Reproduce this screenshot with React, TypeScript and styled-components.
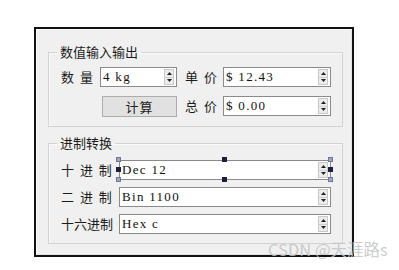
import React from "react";
import styled, { createGlobalStyle } from "styled-components";

const Global = createGlobalStyle`
  html, body { margin: 0; padding: 0; background: #ffffff; }
  body { font-family: "Noto Sans CJK SC", "Noto Sans", sans-serif; }
`;

const Page = styled.div`
  position: relative;
  width: 399px;
  height: 270px;
  padding: 27px 0 0 34px;
  box-sizing: border-box;
`;

const Window = styled.div`
  width: 320px;
  box-sizing: border-box;
  border: 2px solid #111111;
  background: #f0f0f0;
  box-shadow: inset 1px 1px 0 #fbfbfb, inset -1px -1px 0 #e4e4e4;
  padding: 15px 9px 11px 12px;
  display: flex;
  flex-direction: column;
  gap: 8px;
`;

const Group = styled.fieldset<{ $padTop: number; $padBottom: number }>`
  margin: 0;
  min-width: 0;
  border: 1px solid #d3d3d3;
  box-shadow: inset 1px 1px 0 #fafafa;
  padding: ${(p) => p.$padTop}px 12px ${(p) => p.$padBottom}px 12px;
`;

const Title = styled.legend`
  margin-left: -4px;
  padding: 0 3px;
  font-size: 13px;
  line-height: 16px;
  color: #1c1c1c;
`;

const CalcGrid = styled.div`
  display: grid;
  grid-template-columns: 39px 77px 46px 108px;
  grid-auto-rows: 20px;
  row-gap: 9px;
  align-items: center;
`;

const BaseGrid = styled.div`
  display: grid;
  grid-template-columns: 58px 212px;
  grid-auto-rows: 20px;
  row-gap: 7px;
  align-items: center;
`;

const Label = styled.span<{ $indent?: number }>`
  font-size: 13px;
  line-height: 20px;
  color: #1c1c1c;
  white-space: pre;
  word-spacing: 3px;
  padding-left: ${(p) => p.$indent ?? 0}px;
`;

const BoxWrap = styled.div`
  position: relative;
  height: 20px;
`;

const Box = styled.div`
  box-sizing: border-box;
  height: 20px;
  background: #ffffff;
  border: 1px solid #8a8a8a;
  display: flex;
  align-items: center;
  padding: 0 2px 0 2px;
`;

const Value = styled.span`
  flex: 1;
  font-family: "Liberation Serif", "DejaVu Serif", serif;
  font-size: 13px;
  letter-spacing: 1.3px;
  color: #111111;
  white-space: pre;
  overflow: hidden;
`;

const Spin = styled.div`
  width: 10px;
  height: 16px;
  display: flex;
  flex-direction: column;
  border: 1px solid #c9c9c9;
  box-sizing: border-box;
  background: #ececec;
`;

const SpinHalf = styled.div<{ $down?: boolean }>`
  flex: 1;
  display: flex;
  align-items: center;
  justify-content: center;
  border-top: ${(p) => (p.$down ? "1px solid #cfcfcf" : "none")};
`;

const Button = styled.div`
  box-sizing: border-box;
  width: 75px;
  height: 21px;
  margin-left: 2px;
  background: #e1e1e1;
  border: 1px solid #adadad;
  display: flex;
  align-items: center;
  justify-content: center;
  font-size: 13px;
  letter-spacing: 1px;
  color: #1c1c1c;
`;

const Handle = styled.div<{ $x: string; $y: string; $corner?: boolean }>`
  position: absolute;
  left: ${(p) => p.$x};
  top: ${(p) => p.$y};
  width: 5px;
  height: 5px;
  margin: -3px 0 0 -3px;
  box-sizing: border-box;
  background: ${(p) => (p.$corner ? "#9fa6c4" : "#1d1d3d")};
  border: 1px solid ${(p) => (p.$corner ? "#6f7796" : "#1d1d3d")};
`;

const Watermark = styled.div`
  position: absolute;
  left: 268px;
  top: 240px;
  font-family: "Noto Sans CJK SC", "Noto Sans", sans-serif;
  font-size: 16.5px;
  line-height: 18px;
  color: rgba(195, 195, 195, 0.85);
  white-space: pre;
`;

const Arrow = ({ down }: { down?: boolean }) => (
  <svg width="5" height="3" viewBox="0 0 5 3">
    {down ? <polygon points="0,0 5,0 2.5,3" fill="#222" /> : <polygon points="0,3 5,3 2.5,0" fill="#222" />}
  </svg>
);

const SpinBox = ({ value, selected }: { value: string; selected?: boolean }) => (
  <BoxWrap>
    <Box>
      <Value>{value}</Value>
      <Spin>
        <SpinHalf>
          <Arrow />
        </SpinHalf>
        <SpinHalf $down>
          <Arrow down />
        </SpinHalf>
      </Spin>
    </Box>
    {selected && (
      <>
        <Handle $x="0%" $y="0%" $corner />
        <Handle $x="50%" $y="0%" />
        <Handle $x="100%" $y="0%" $corner />
        <Handle $x="0%" $y="50%" />
        <Handle $x="100%" $y="50%" />
        <Handle $x="0%" $y="100%" $corner />
        <Handle $x="50%" $y="100%" />
        <Handle $x="100%" $y="100%" $corner />
      </>
    )}
  </BoxWrap>
);

export default function App() {
  return (
    <Page>
      <Global />
      <Window>
        <Group $padTop={7} $padBottom={10}>
          <Title>数值输入输出</Title>
          <CalcGrid>
            <Label>数 量</Label>
            <SpinBox value="4 kg" />
            <Label $indent={8}>单 价</Label>
            <SpinBox value="$ 12.43" />
            <span />
            <Button>计算</Button>
            <Label $indent={8}>总 价</Label>
            <SpinBox value="$ 0.00" />
          </CalcGrid>
        </Group>
        <Group $padTop={9} $padBottom={9}>
          <Title>进制转换</Title>
          <BaseGrid>
            <Label>十 进 制</Label>
            <SpinBox value="Dec 12" selected />
            <Label>二 进 制</Label>
            <SpinBox value="Bin 1100" />
            <Label>十六进制</Label>
            <SpinBox value="Hex c" />
          </BaseGrid>
        </Group>
      </Window>
      <Watermark>CSDN @天涯路s</Watermark>
    </Page>
  );
}
